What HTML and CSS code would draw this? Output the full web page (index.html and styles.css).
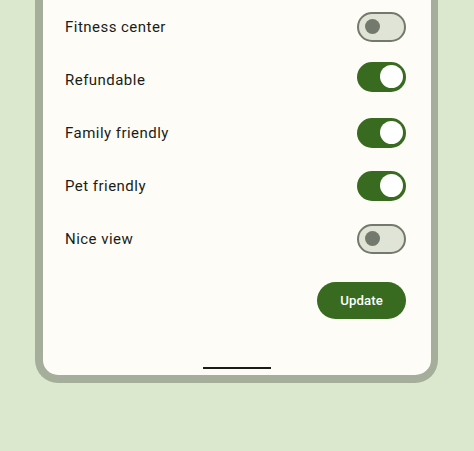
FILE: index.html
```html
<!DOCTYPE html>
<html>
<head>
<meta charset="utf-8">
<link rel="stylesheet" href="styles.css">
</head>
<body>
<div class="phone">
  <div class="list">
    <div class="row"><span class="label">Fitness center</span><span class="switch off"><span class="thumb"></span></span></div>
    <div class="row"><span class="label">Refundable</span><span class="switch on shifted"><span class="thumb"></span></span></div>
    <div class="row"><span class="label">Family friendly</span><span class="switch on"><span class="thumb"></span></span></div>
    <div class="row"><span class="label">Pet friendly</span><span class="switch on"><span class="thumb"></span></span></div>
    <div class="row"><span class="label">Nice view</span><span class="switch off"><span class="thumb"></span></span></div>
  </div>
  <div class="actions"><button class="update">Update</button></div>
  <div class="handle"></div>
</div>
</body>
</html>
```
FILE: styles.css
```css
html, body {
  margin: 0;
  padding: 0;
}
body {
  background: #dbe8cd;
  width: 474px;
  height: 451px;
  overflow: hidden;
  font-family: Roboto, "Noto Sans", sans-serif;
}
.phone {
  margin-left: 35px;
  width: 388px;
  height: 375px;
  box-sizing: content-box;
  background: #fdfcf6;
  border: 8px solid #a5ae9a;
  border-top: 0;
  border-right-width: 7px;
  border-radius: 0 0 23px 23px;
  display: flex;
  flex-direction: column;
  padding: 0;
}
.list {
  display: flex;
  flex-direction: column;
  padding: 0 25px 0 22px;
}
.row {
  height: 53px;
  display: flex;
  align-items: center;
  justify-content: space-between;
}
.label {
  font-size: 15px;
  letter-spacing: 0.47px;
  color: #1b1c18;
}
.switch {
  position: relative;
  width: 49px;
  height: 30px;
  box-sizing: border-box;
  border-radius: 15px;
  display: flex;
  align-items: center;
}
.switch.off {
  background: #e0e4d6;
  border: 2px solid #74796d;
  padding-left: 6px;
}
.switch.off .thumb {
  width: 15px;
  height: 15px;
  border-radius: 50%;
  background: #74796d;
}
.switch.on {
  background: #386a20;
  justify-content: flex-end;
  padding-right: 3px;
}
.switch.on .thumb {
  width: 23px;
  height: 23px;
  border-radius: 50%;
  background: #ffffff;
}
.switch.shifted {
  transform: translateY(-3px);
}
.actions {
  display: flex;
  justify-content: flex-end;
  padding: 0 25px 0 0;
  margin-top: 17px;
}
.update {
  width: 89px;
  height: 37px;
  border: 0;
  border-radius: 19px;
  background: #386a20;
  color: #ffffff;
  font-family: Roboto, "Noto Sans", sans-serif;
  font-size: 13.2px;
  font-weight: 500;
  letter-spacing: 0.1px;
  padding: 0;
}
.handle {
  margin: auto auto 6px 160px;
  width: 68px;
  height: 2px;
  background: #1b1c18;
}
```
